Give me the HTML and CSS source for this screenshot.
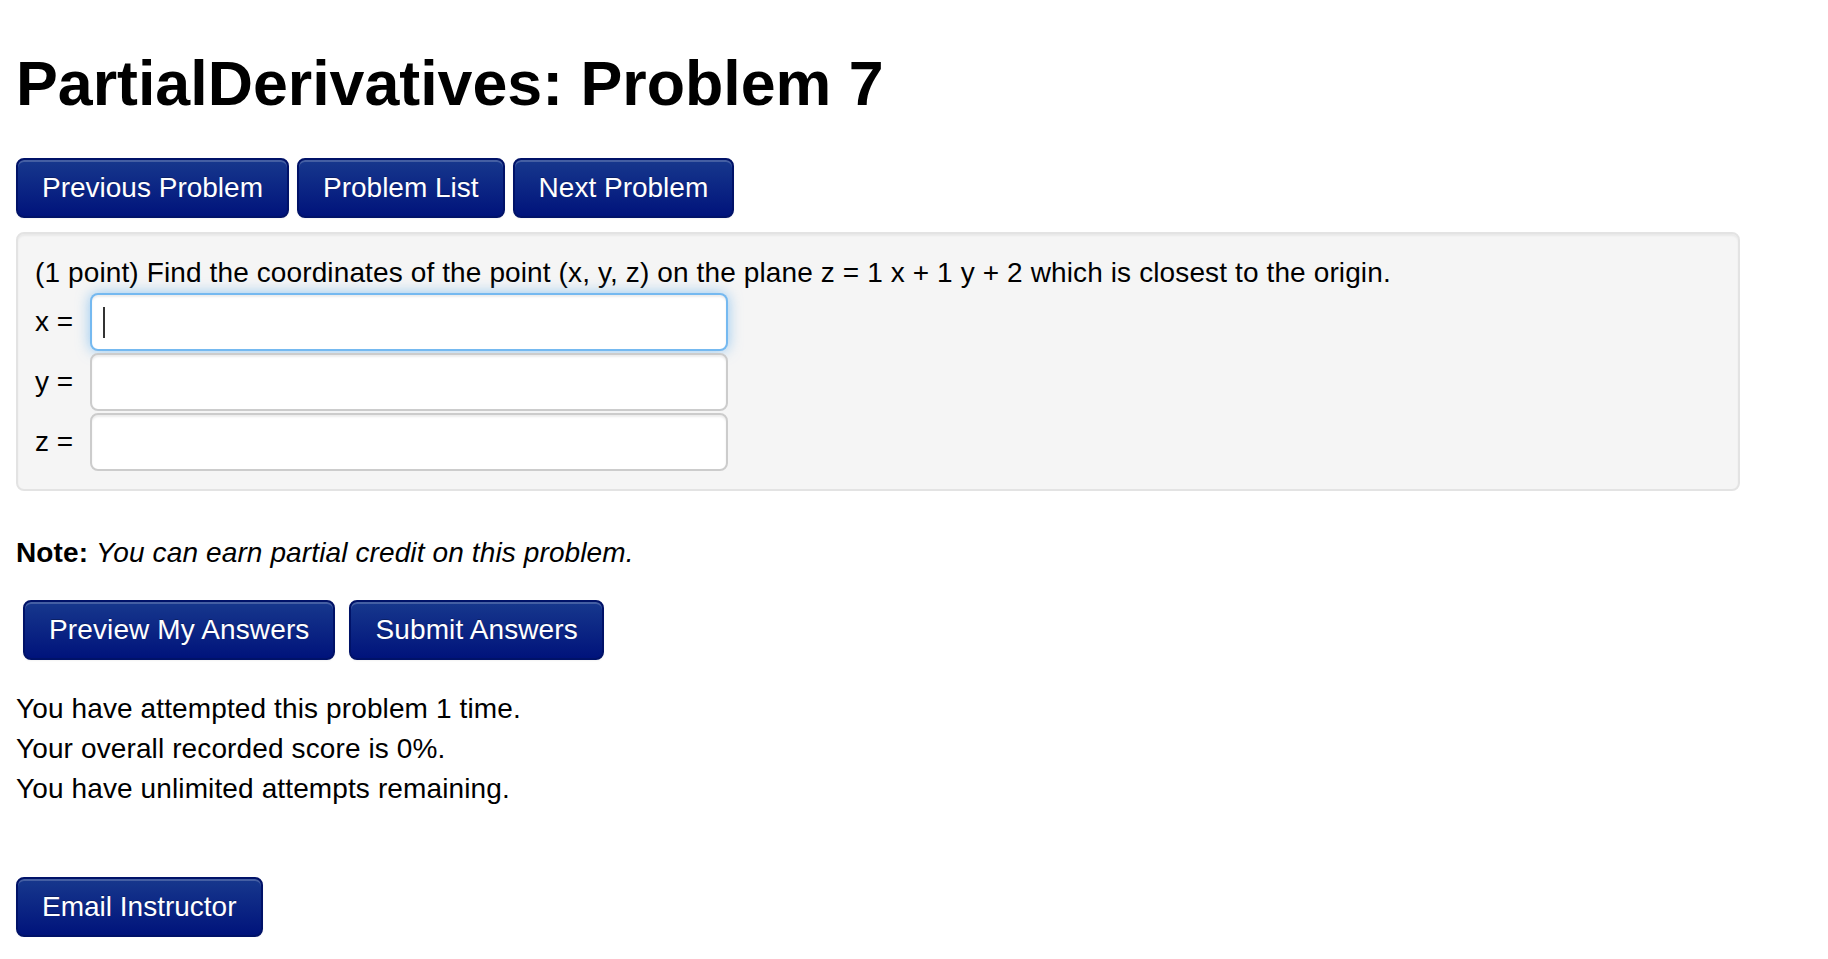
FILE: index.html
```html
<!DOCTYPE html>
<html lang="en">
<head>
  <meta charset="UTF-8">
  <meta name="viewport" content="width=device-width, initial-scale=1.0">
  <title>PartialDerivatives: Problem 7</title>
  <link rel="stylesheet" href="styles.css">
</head>
<body>

  <h1 class="problem-title">PartialDerivatives: Problem 7</h1>

  <!-- Navigation entre les problèmes -->
  <div class="problem-nav">
    <button class="btn">Previous Problem</button>
    <button class="btn">Problem List</button>
    <button class="btn">Next Problem</button>
  </div>

  <!-- Enoncé du problème -->
  <div class="problem-box">
    <p class="question">(1 point) Find the coordinates of the point (x, y, z) on the plane z = 1 x + 1 y + 2 which is closest to the origin.</p>
    <div class="answer-row">
      <label for="answer-x">x =</label>
      <div class="answer-wrap focused">
        <input type="text" id="answer-x" class="answer">
      </div>
    </div>
    <div class="answer-row">
      <label for="answer-y">y =</label>
      <div class="answer-wrap">
        <input type="text" id="answer-y" class="answer">
      </div>
    </div>
    <div class="answer-row">
      <label for="answer-z">z =</label>
      <div class="answer-wrap">
        <input type="text" id="answer-z" class="answer">
      </div>
    </div>
  </div>

  <p class="note"><b>Note:</b> <i>You can earn partial credit on this problem.</i></p>

  <div class="submit-row">
    <button class="btn">Preview My Answers</button>
    <button class="btn">Submit Answers</button>
  </div>

  <div class="attempts">
    <p>You have attempted this problem 1 time.</p>
    <p>Your overall recorded score is 0%.</p>
    <p>You have unlimited attempts remaining.</p>
  </div>

  <button class="btn email-btn">Email Instructor</button>

</body>
</html>
```

FILE: styles.css
```css
body {
  margin: 0;
  padding: 0 16px;
  background-color: #fff;
  color: #000;
  font-family: "Liberation Sans", Arial, sans-serif;
  font-size: 28px;
  line-height: 40px;
  letter-spacing: 0.12px;
}

p {
  margin: 0;
}

.problem-title {
  margin: 48px 0 40px;
  font-size: 62.7px;
  line-height: 70px;
  font-weight: bold;
  letter-spacing: 0;
}

/* Boutons bleus */
.btn {
  display: inline-block;
  margin: 0;
  padding: 8px 24px;
  font-family: "Liberation Sans", Arial, sans-serif;
  font-size: 28px;
  line-height: 40px;
  letter-spacing: 0;
  color: #fff;
  background-color: #001a80;
  background-image: linear-gradient(to bottom, #17388d, #00137b);
  border: 2px solid #001268;
  border-radius: 8px;
  box-shadow: inset 0 2px 0 rgba(255, 255, 255, 0.2), 0 1px 2px rgba(0, 0, 0, 0.05);
  text-shadow: 0 -1px 0 rgba(0, 0, 0, 0.25);
  cursor: pointer;
}

.problem-nav {
  display: flex;
  gap: 8px;
}

/* Cadre gris du problème */
.problem-box {
  box-sizing: border-box;
  width: 1724px;
  margin-top: 14px;
  padding: 19px 17px 18px;
  background-color: #f5f5f5;
  border: 2px solid #e3e3e3;
  border-radius: 8px;
  box-shadow: inset 0 2px 2px rgba(0, 0, 0, 0.05);
}

.answer-row {
  display: flex;
  align-items: center;
  margin-bottom: 2px;
}

.answer-row:last-child {
  margin-bottom: 0;
}

.answer-row label {
  margin-right: 17px;
  letter-spacing: 0;
}

.answer-wrap {
  position: relative;
}

.answer {
  box-sizing: border-box;
  display: block;
  width: 638px;
  height: 58px;
  margin: 0;
  padding: 8px 12px;
  font-family: "Liberation Sans", Arial, sans-serif;
  font-size: 28px;
  background-color: #fff;
  border: 2px solid #ccc;
  border-radius: 8px;
  box-shadow: inset 0 2px 2px rgba(0, 0, 0, 0.075);
  outline: none;
}

.focused .answer {
  border-color: rgba(82, 168, 236, 0.8);
  box-shadow: inset 0 2px 2px rgba(0, 0, 0, 0.075), 0 0 14px rgba(82, 168, 236, 0.6);
}

/* Curseur de saisie */
.focused::after {
  content: "";
  position: absolute;
  left: 13px;
  top: 14px;
  width: 2px;
  height: 31px;
  background-color: #333;
}

.note {
  margin-top: 42px;
}

.submit-row {
  display: flex;
  gap: 14px;
  margin-top: 27px;
  padding-left: 7px;
}

.submit-row .btn {
  letter-spacing: 0.12px;
}

.attempts {
  margin-top: 29px;
}

.email-btn {
  margin-top: 68px;
}
```
